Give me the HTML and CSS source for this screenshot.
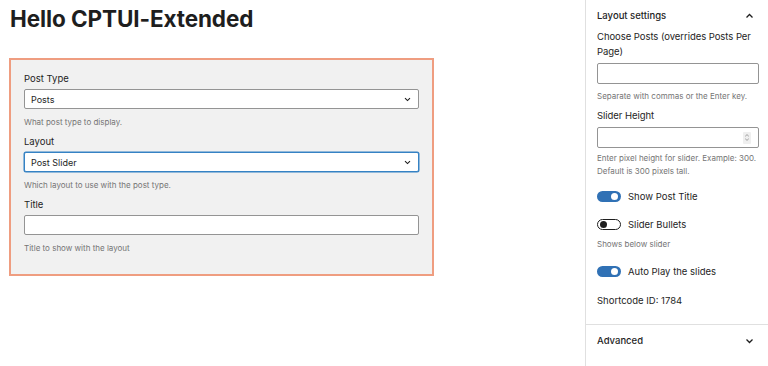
FILE: index.html
```html
<!DOCTYPE html>
<html lang="en">
<head>
<meta charset="utf-8">
<title>Hello CPTUI-Extended</title>
<link rel="stylesheet" href="styles.css">
</head>
<body>
<div class="app">
  <main class="editor">
    <h1 class="page-title">Hello CPTUI-Extended</h1>
    <section class="block">
      <div class="field">
        <div class="field-label">Post Type</div>
        <div class="select"><span>Posts</span><svg class="chev" width="7" height="5" viewBox="0 0 7 5"><path d="M1 1.2 L3.5 3.6 L6 1.2" fill="none" stroke="#1e1e1e" stroke-width="1.1"/></svg></div>
        <p class="help">What post type to display.</p>
      </div>
      <div class="field">
        <div class="field-label">Layout</div>
        <div class="select is-focused"><span>Post Slider</span><svg class="chev" width="7" height="5" viewBox="0 0 7 5"><path d="M1 1.2 L3.5 3.6 L6 1.2" fill="none" stroke="#1e1e1e" stroke-width="1.1"/></svg></div>
        <p class="help">Which layout to use with the post type.</p>
      </div>
      <div class="field">
        <div class="field-label">Title</div>
        <div class="text-input"></div>
        <p class="help">Title to show with the layout</p>
      </div>
    </section>
  </main>
  <aside class="sidebar">
    <div class="panel">
      <div class="panel-header"><span>Layout settings</span><svg width="9" height="6" viewBox="0 0 9 6"><path d="M1.5 4.5 L4.5 1.5 L7.5 4.5" fill="none" stroke="#1e1e1e" stroke-width="1.3"/></svg></div>
      <div class="panel-body">
        <div class="s-field">
          <div class="s-label">Choose Posts (overrides Posts Per Page)</div>
          <div class="s-input"></div>
          <p class="s-help">Separate with commas or the Enter key.</p>
        </div>
        <div class="s-field">
          <div class="s-label">Slider Height</div>
          <div class="s-input number"><span class="spin"><svg width="6" height="9" viewBox="0 0 6 9"><path d="M1.2 3.3 L3 1.6 L4.8 3.3 M1.2 5.7 L3 7.4 L4.8 5.7" fill="none" stroke="#8a8a8a" stroke-width="0.8"/></svg></span></div>
          <p class="s-help short">Enter pixel height for slider. Example: 300. Default is 300 pixels tall.</p>
        </div>
        <div class="toggle-row first"><span class="toggle on"></span><span>Show Post Title</span></div>
        <div class="toggle-row"><span class="toggle off"></span><span>Slider Bullets</span></div>
        <p class="s-help tight">Shows below slider</p>
        <div class="toggle-row after-help"><span class="toggle on"></span><span>Auto Play the slides</span></div>
        <p class="shortcode">Shortcode ID: 1784</p>
      </div>
    </div>
    <div class="panel-header advanced"><span>Advanced</span><svg width="9" height="6" viewBox="0 0 9 6"><path d="M1.5 1.5 L4.5 4.5 L7.5 1.5" fill="none" stroke="#1e1e1e" stroke-width="1.3"/></svg></div>
  </aside>
</div>
</body>
</html>
```
FILE: styles.css
```css
* { box-sizing: border-box; }
html, body { margin: 0; padding: 0; background: #fff; }
body {
  font-family: Inter, "Noto Sans", "Liberation Sans", sans-serif;
  color: #1e1e1e;
  width: 768px;
  height: 366px;
  overflow: hidden;
}
.app { display: flex; height: 366px; }
.editor { width: 585px; flex: none; }
.page-title {
  margin: 0;
  padding: 5px 0 0 10px;
  font-size: 22.5px;
  line-height: 28px;
  font-weight: 700;
  letter-spacing: -0.1px;
}
.block {
  margin: 25px 0 0 9px;
  width: 425px;
  background: #f1f1f1;
  border: 2px solid #ef9d80;
  padding: 12px 13px 20px;
}
.field + .field { margin-top: 7px; }
.field-label {
  font-size: 9.5px;
  line-height: 14px;
  font-weight: 400;
  margin-bottom: 3px;
}
.select, .text-input {
  height: 20px;
  background: #fff;
  border: 1px solid #949494;
  border-radius: 2px;
  display: flex;
  align-items: center;
  justify-content: space-between;
  padding: 0 7px 0 6px;
  font-size: 9px;
}
.select.is-focused {
  border-color: #3582c4;
  box-shadow: 0 0 0 0.5px #3582c4;
}
.help {
  margin: 7px 0 0;
  font-size: 8px;
  line-height: 12px;
  color: #757575;
}
.sidebar {
  flex: 1;
  border-left: 1px solid #e0e0e0;
  display: flex;
  flex-direction: column;
}
.panel { border-bottom: 1px solid #e0e0e0; }
.panel-header {
  display: flex;
  align-items: center;
  justify-content: space-between;
  padding: 9px 14px 0 11px;
  height: 23px;
  font-size: 9.5px;
  line-height: 14px;
  font-weight: 500;
}
.panel-body { padding: 6px 9px 16px 11px; }
.s-field + .s-field { margin-top: 5px; }
.s-label {
  font-size: 9.5px;
  line-height: 15px;
  font-weight: 400;
  margin-bottom: 4px;
  letter-spacing: -0.05px;
}
.s-input {
  height: 21px;
  border: 1px solid #949494;
  border-radius: 2px;
  background: #fff;
  display: flex;
  align-items: center;
  justify-content: flex-end;
  padding-right: 7px;
}
.spin {
  width: 8px;
  height: 12px;
  background: #efefef;
  display: flex;
  align-items: center;
  justify-content: center;
  border-radius: 1px;
}
.s-help {
  margin: 6px 0 0;
  font-size: 8px;
  line-height: 13px;
  color: #757575;
}
.s-help.short { margin-top: 4px; }
.s-help.tight { margin-top: 6px; }
.toggle-row {
  display: flex;
  align-items: center;
  gap: 7px;
  height: 15px;
  font-size: 9.5px;
  font-weight: 400;
  margin-top: 13px;
}
.toggle-row.first { margin-top: 11px; }
.toggle {
  width: 24px;
  height: 11px;
  border-radius: 6px;
  position: relative;
  flex: none;
}
.toggle.on { background: #3071b5; }
.toggle.off { background: #fff; border: 1px solid #1e1e1e; }
.toggle::after {
  content: "";
  position: absolute;
  width: 7px;
  height: 7px;
  border-radius: 50%;
  top: 2px;
}
.toggle.on::after { right: 3px; background: #fff; }
.toggle.off::after { left: 2px; top: 1px; background: #1e1e1e; }
.toggle-row.after-help { margin-top: 13px; }
.shortcode {
  margin: 14px 0 0;
  font-size: 9.5px;
  line-height: 15px;
  font-weight: 400;
}
```
